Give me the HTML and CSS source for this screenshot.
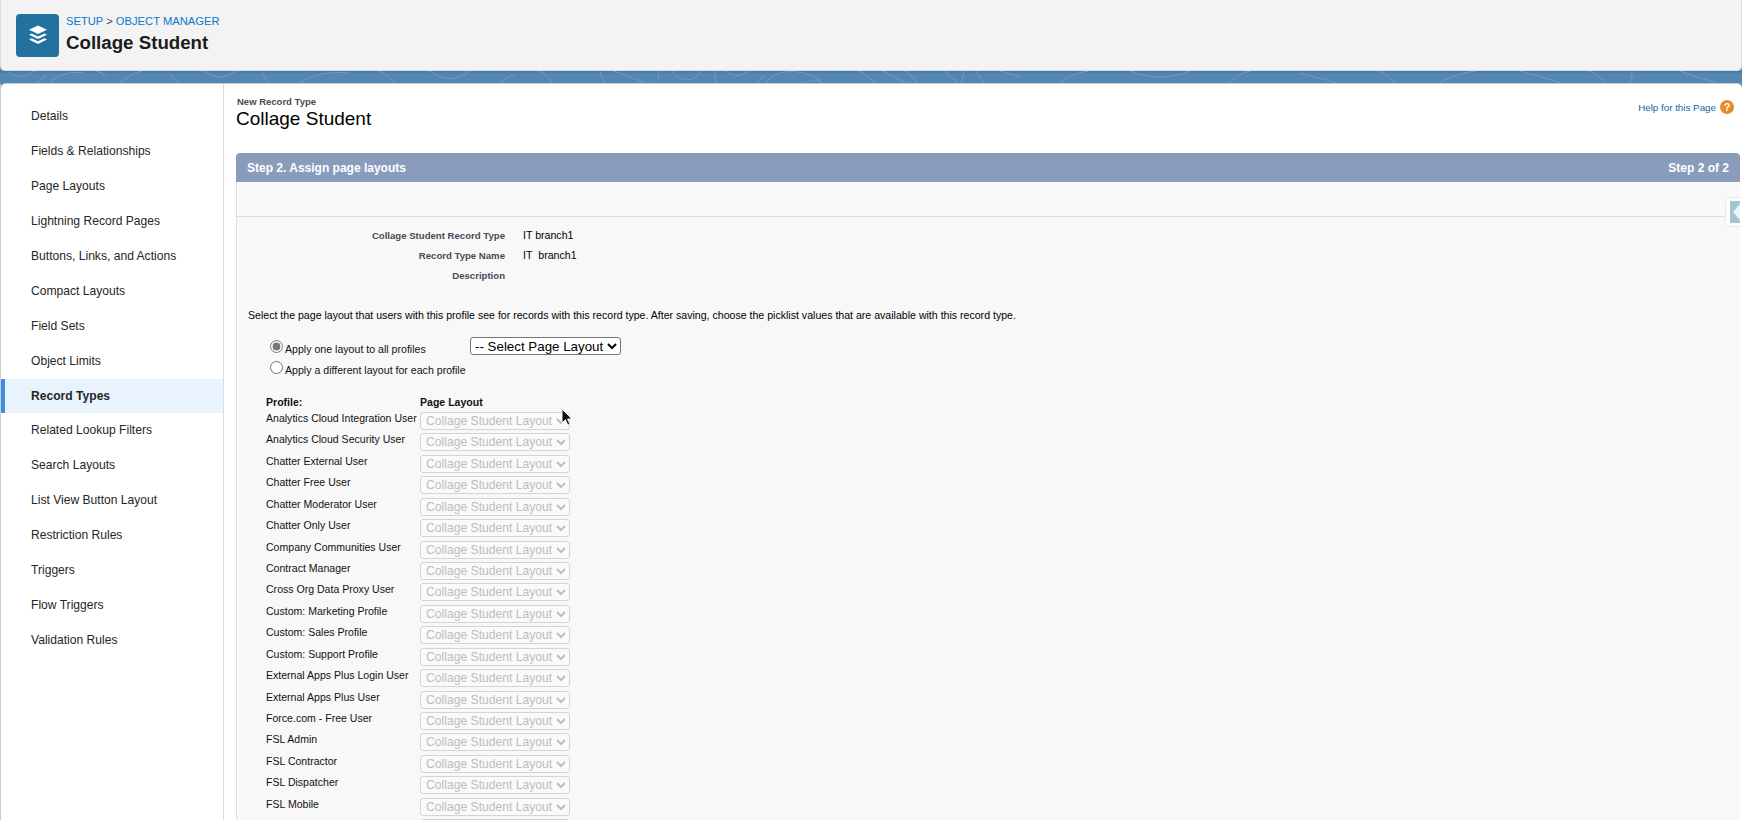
FILE: index.html
```html
<!DOCTYPE html>
<html lang="en">
<head>
    <meta charset="UTF-8">
    <title>Collage Student | Record Types</title>
    <link rel="stylesheet" href="styles.css">
</head>
<body>
    <header class="page-header">
        <div class="object-icon">
            <svg width="24" height="24" viewBox="0 0 24 24" fill="#fff">
                <path d="M12 2.5l9 4.3-9 4.3-9-4.3z"/>
                <path d="M5.6 10.4l6.4 3 6.4-3 2.6 1.3-9 4.3-9-4.3z"/>
                <path d="M5.6 15.3l6.4 3 6.4-3 2.6 1.3-9 4.3-9-4.3z"/>
            </svg>
        </div>
        <div>
            <div class="crumbs"><a href="#">SETUP</a> &gt; <a href="#">OBJECT MANAGER</a></div>
            <h1 class="object-name">Collage Student</h1>
        </div>
    </header>
    <div class="band">
        <svg class="band-lines" width="1742" height="12" fill="none" stroke="#719bc2" stroke-width="1">
            <path d="M8 1c8 6 18 6 26-1M38 12l8-8M50 12c6-8 18-12 34-10M96 0l10 4M120 12c10-8 14-10 22-12M170 3l8 9M205 0c10 8 20 8 30 0M262 2l6 10M300 12c10-8 30-12 50-10M380 0c6 4 12 8 14 12M430 0c14 10 26 10 40 0M500 12c4-4 8-6 14-8M540 0c6 4 10 8 12 12"/>
            <path d="M600 0l4 12M614 0l32 12M658 0c2 6 0 10-4 12M672 0c8 12 24 12 28 0M715 0v12M726 0c6 6 16 6 22 0M757 12l8-8M766 12c8-16 44-14 56 0M806 12c6-4 12-4 16 0M860 0l16 12M882 0l24 12M905 0c6 4 10 8 12 12M945 0l12 12M964 0l-2 12M976 0l8 12M1000 0l22 6"/>
            <path d="M1060 12c8-6 16-10 28-12M1130 0c20 8 40 8 60 0M1230 12c8-8 12-10 20-12M1300 2c14 4 24 6 36 10M1380 0c8 6 12 8 16 12M1440 12c10-6 20-10 36-12M1520 0c14 4 30 8 40 12M1590 0c8 4 12 8 14 12M1630 12c2-4 2-8 2-12M1680 0c10 4 24 8 36 12"/>
        </svg>
    </div>
    <div class="main">
        <nav class="sidebar">
            <a class="nav-item" href="#">Details</a>
            <a class="nav-item" href="#">Fields &amp; Relationships</a>
            <a class="nav-item" href="#">Page Layouts</a>
            <a class="nav-item" href="#">Lightning Record Pages</a>
            <a class="nav-item" href="#">Buttons, Links, and Actions</a>
            <a class="nav-item" href="#">Compact Layouts</a>
            <a class="nav-item" href="#">Field Sets</a>
            <a class="nav-item" href="#">Object Limits</a>
            <a class="nav-item active" href="#">Record Types</a>
            <a class="nav-item" href="#">Related Lookup Filters</a>
            <a class="nav-item" href="#">Search Layouts</a>
            <a class="nav-item" href="#">List View Button Layout</a>
            <a class="nav-item" href="#">Restriction Rules</a>
            <a class="nav-item" href="#">Triggers</a>
            <a class="nav-item" href="#">Flow Triggers</a>
            <a class="nav-item" href="#">Validation Rules</a>
        </nav>
        <section class="content">
            <div class="title-row">
                <div>
                    <div class="title-kicker">New Record Type</div>
                    <h2 class="title-main">Collage Student</h2>
                </div>
                <div class="help">
                    <a href="#">Help for this Page</a>
                    <span class="help-icon">?</span>
                </div>
            </div>
            <div class="step-bar">
                <span>Step 2. Assign page layouts</span>
                <span>Step 2 of 2</span>
            </div>
            <div class="step-body">
                <div class="button-row"></div>
                <dl class="details">
                    <dt>Collage Student Record Type</dt><dd>IT branch1</dd>
                    <dt>Record Type Name</dt><dd>IT&nbsp; branch1</dd>
                    <dt>Description</dt><dd></dd>
                </dl>
                <p class="instructions">Select the page layout that users with this profile see for records with this record type. After saving, choose the picklist values that are available with this record type.</p>
                <div class="apply-options">
                    <label class="apply-one"><input type="radio" name="apply" checked><span>Apply one layout to all profiles</span></label>
                    <select class="all-select"><option>-- Select Page Layout --</option></select>
                    <label class="apply-each"><input type="radio" name="apply"><span>Apply a different layout for each profile</span></label>
                </div>
                <table class="profiles">
                    <tr><th>Profile:</th><th>Page Layout</th></tr>
                    <tr><td>Analytics Cloud Integration User</td><td><select disabled><option>Collage Student Layout</option></select></td></tr>
                    <tr><td>Analytics Cloud Security User</td><td><select disabled><option>Collage Student Layout</option></select></td></tr>
                    <tr><td>Chatter External User</td><td><select disabled><option>Collage Student Layout</option></select></td></tr>
                    <tr><td>Chatter Free User</td><td><select disabled><option>Collage Student Layout</option></select></td></tr>
                    <tr><td>Chatter Moderator User</td><td><select disabled><option>Collage Student Layout</option></select></td></tr>
                    <tr><td>Chatter Only User</td><td><select disabled><option>Collage Student Layout</option></select></td></tr>
                    <tr><td>Company Communities User</td><td><select disabled><option>Collage Student Layout</option></select></td></tr>
                    <tr><td>Contract Manager</td><td><select disabled><option>Collage Student Layout</option></select></td></tr>
                    <tr><td>Cross Org Data Proxy User</td><td><select disabled><option>Collage Student Layout</option></select></td></tr>
                    <tr><td>Custom: Marketing Profile</td><td><select disabled><option>Collage Student Layout</option></select></td></tr>
                    <tr><td>Custom: Sales Profile</td><td><select disabled><option>Collage Student Layout</option></select></td></tr>
                    <tr><td>Custom: Support Profile</td><td><select disabled><option>Collage Student Layout</option></select></td></tr>
                    <tr><td>External Apps Plus Login User</td><td><select disabled><option>Collage Student Layout</option></select></td></tr>
                    <tr><td>External Apps Plus User</td><td><select disabled><option>Collage Student Layout</option></select></td></tr>
                    <tr><td>Force.com - Free User</td><td><select disabled><option>Collage Student Layout</option></select></td></tr>
                    <tr><td>FSL Admin</td><td><select disabled><option>Collage Student Layout</option></select></td></tr>
                    <tr><td>FSL Contractor</td><td><select disabled><option>Collage Student Layout</option></select></td></tr>
                    <tr><td>FSL Dispatcher</td><td><select disabled><option>Collage Student Layout</option></select></td></tr>
                    <tr><td>FSL Mobile</td><td><select disabled><option>Collage Student Layout</option></select></td></tr>
                </table>
                <div class="next-select"></div>
            </div>
            <div class="side-tab"><span class="side-tab-arrow"></span></div>
        </section>
    </div>
    <svg class="cursor" width="12" height="18" viewBox="0 0 12 18">
        <path d="M1 1v14l3.4-3.2 2.4 5.4 2.2-1-2.4-5.2H11z" fill="#111" stroke="#fff" stroke-width="1"/>
    </svg>
</body>
</html>
```

FILE: styles.css
```css
* {
    box-sizing: border-box;
}
html, body {
    height: 820px;
    overflow: hidden;
}
body {
    margin: 0;
    position: relative;
    background: #5587b5;
    font-family: "Liberation Sans", Arial, sans-serif;
    color: #111;
}
a {
    text-decoration: none;
}
.page-header {
    height: 71px;
    display: flex;
    align-items: center;
    gap: 7px;
    padding: 0 15px;
    background: #f3f3f3;
    border: 1px solid #d8dde4;
    border-top: none;
    border-radius: 0 0 5px 5px;
}
.object-icon {
    width: 43px;
    height: 43px;
    display: flex;
    align-items: center;
    justify-content: center;
    background: #22719f;
    border-radius: 4px;
}
.crumbs {
    font-size: 11.2px;
    line-height: 14px;
    color: #444;
    margin-top: -2px;
}
.crumbs a {
    color: #0a78cf;
}
.object-name {
    margin: 4px 0 0;
    font-size: 18.7px;
    line-height: 22px;
    font-weight: 700;
    color: #1c1c1c;
}
.band {
    height: 12px;
    overflow: hidden;
    background: linear-gradient(to bottom, #47769f, #5587b5 3px);
}
.band-lines {
    display: block;
}
.main {
    height: 737px;
    display: flex;
    margin-left: 1px;
    background: #fff;
    border-top: 1px solid #c4ccd4;
    border-radius: 5px 5px 0 0;
}
.sidebar {
    width: 224px;
    flex: none;
    padding-top: 15px;
    border-right: 1px solid #dcdcdc;
    border-left: 1px solid #ccc;
    margin-left: -1px;
}
.nav-item {
    display: block;
    height: 34.95px;
    line-height: 34.95px;
    padding-left: 30px;
    font-size: 12.1px;
    color: #262626;
}
.nav-item.active {
    background: #e8f3fd;
    border-left: 4px solid #3a8de8;
    padding-left: 26px;
    font-weight: 700;
}
.content {
    position: relative;
    flex: 1;
    padding: 13px 2px 0 12px;
    min-width: 0;
}
.title-row {
    display: flex;
    justify-content: space-between;
    height: 56px;
}
.title-kicker {
    margin-left: 1px;
    font-size: 9.5px;
    line-height: 10px;
    font-weight: 700;
    color: #4a4a56;
}
.title-main {
    margin: 0;
    font-size: 19px;
    line-height: 23px;
    font-weight: 400;
    color: #000;
}
.help {
    display: flex;
    align-items: center;
    gap: 4px;
    height: 14px;
    margin: 3px 6px 0 0;
    font-size: 9.8px;
}
.help a {
    color: #15689f;
}
.help-icon {
    width: 14px;
    height: 14px;
    border-radius: 50%;
    background: #e8892a;
    color: #fff;
    font-size: 11px;
    line-height: 14px;
    font-weight: 700;
    text-align: center;
}
.step-bar {
    height: 29px;
    display: flex;
    align-items: center;
    justify-content: space-between;
    padding: 0 11px;
    background: #8a9cbc;
    border-radius: 4px 4px 0 0;
    color: #fff;
    font-size: 12px;
    font-weight: 700;
}
.step-body {
    height: 640px;
    overflow: hidden;
    background: #f8f8f8;
    border-left: 1px solid #e0e0e0;
}
.button-row {
    height: 35px;
    border-top: 1px solid #fff;
    border-bottom: 1px solid #dbdbdb;
}
.details {
    display: grid;
    grid-template-columns: 268px 1fr;
    grid-auto-rows: 20.3px;
    column-gap: 18px;
    align-items: center;
    margin: 8px 0 0;
    font-size: 10.6px;
}
.details dt {
    text-align: right;
    font-size: 9.6px;
    font-weight: 700;
    color: #4a4a56;
}
.details dd {
    margin: 0;
    color: #000;
}
.instructions {
    margin: 22px 0 0 11px;
    font-size: 10.58px;
    line-height: 14px;
    color: #000;
}
.apply-options {
    display: grid;
    grid-template-columns: 200px auto 1fr;
    align-items: center;
    margin: 15px 0 0 33px;
    font-size: 10.6px;
}
.apply-one, .apply-each {
    display: flex;
    align-items: center;
    gap: 2px;
    height: 21px;
    white-space: nowrap;
}
.apply-each {
    grid-column: 1 / -1;
}
.apply-one span, .apply-each span {
    padding-top: 3px;
}
.apply-one input, .apply-each input {
    width: 13px;
    height: 13px;
    margin: 0 0 2px;
    accent-color: #777;
}
.all-select {
    width: 151px;
    height: 18px;
    padding: 0;
    font-family: "Liberation Sans", Arial, sans-serif;
    font-size: 13.33px;
    background: #fff;
    color: #000;
    border: 1px solid #767676;
    border-radius: 3px;
    margin-top: -2px;
}
.profiles {
    margin: 17px 0 0 29px;
    border-collapse: collapse;
    font-size: 10.55px;
}
.profiles th {
    height: 16px;
    padding: 0;
    text-align: left;
    font-size: 10.55px;
    font-weight: 700;
    color: #111;
    vertical-align: top;
}
.profiles td {
    height: 21.45px;
    padding: 0;
    vertical-align: top;
}
.profiles td:first-child {
    width: 154px;
    white-space: nowrap;
}
.profiles select {
    display: block;
    width: 150px;
    height: 18px;
    padding: 0 0 0 1px;
    font-family: "Liberation Sans", Arial, sans-serif;
    font-size: 12.15px;
    color: #bdbdbd;
    background: #fafafa;
    border: 1px solid #d4d4d4;
    border-radius: 3px;
    opacity: 1;
}
.next-select {
    width: 150px;
    height: 18px;
    margin-left: 183px;
    background: #fafafa;
    border: 1px solid #d4d4d4;
    border-radius: 3px;
}
.side-tab {
    position: absolute;
    right: 0;
    top: 113px;
    width: 17px;
    height: 30px;
    padding: 3px 0 0 4px;
    background: #fff;
    border: 1px solid #e8e8e8;
    border-right: none;
    border-radius: 4px 0 0 4px;
}
.side-tab-arrow {
    display: block;
    width: 10px;
    height: 22px;
    background: #a5c4d2;
    position: relative;
}
.side-tab-arrow::before {
    content: "";
    position: absolute;
    left: 3px;
    top: 3px;
    border: 8px solid transparent;
    border-left: none;
    border-right: 7px solid #eef3f5;
}
.cursor {
    position: absolute;
    left: 561px;
    top: 408px;
}
```
